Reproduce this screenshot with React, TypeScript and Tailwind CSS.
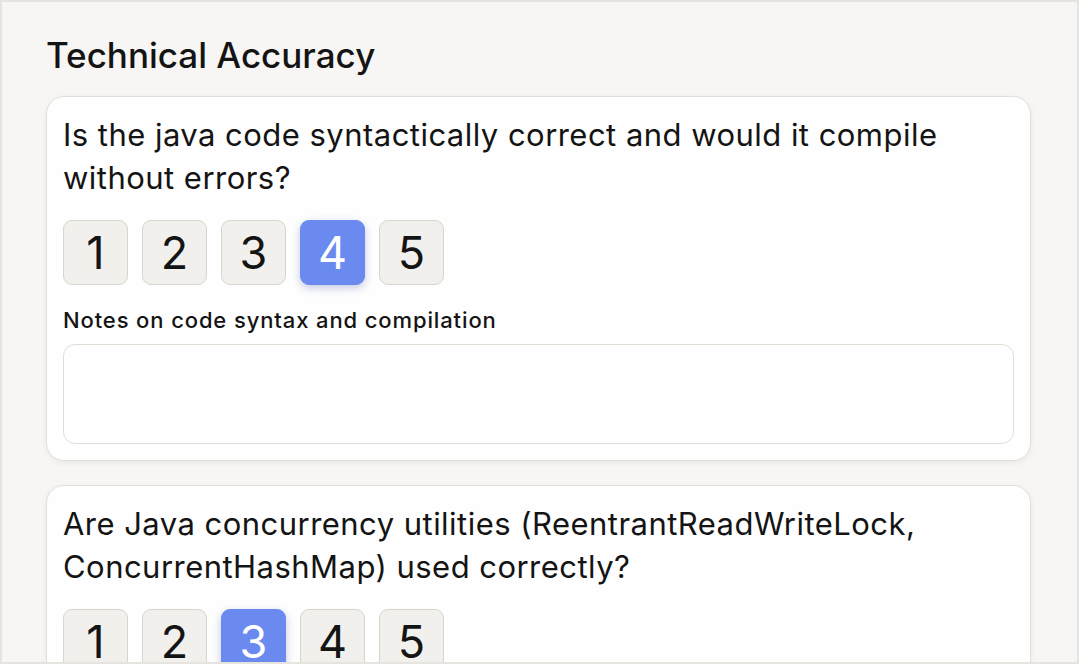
import { useState } from "react";

type Question = {
  id: string;
  text: string;
  selected: number;
  notesLabel?: string;
};

const questions: Question[] = [
  {
    id: "syntax",
    text: "Is the java code syntactically correct and would it compile without errors?",
    selected: 4,
    notesLabel: "Notes on code syntax and compilation",
  },
  {
    id: "concurrency",
    text: "Are Java concurrency utilities (ReentrantReadWriteLock, ConcurrentHashMap) used correctly?",
    selected: 3,
    notesLabel: "Notes on concurrency usage",
  },
];

const RatingButtons = ({ value, onChange }: { value: number; onChange: (v: number) => void }) => (
  <div className="flex gap-[14px]">
    {[1, 2, 3, 4, 5].map((n) => (
      <button
        key={n}
        onClick={() => onChange(n)}
        className={
          n === value
            ? "flex h-[65px] w-[65px] items-center justify-center rounded-[9px] border border-[#6b8af0] bg-[#6b8af0] text-[45px] leading-none text-white shadow-[0_3px_8px_rgba(60,80,160,0.3)]"
            : "flex h-[65px] w-[65px] items-center justify-center rounded-[9px] border border-[#d8d5cc] bg-[#f1f0ec] text-[45px] leading-none text-[#141414]"
        }
      >
        {n}
      </button>
    ))}
  </div>
);

const QuestionCard = ({ q }: { q: Question }) => {
  const [value, setValue] = useState(q.selected);
  return (
    <div className="rounded-[18px] border border-[#e2dfd8] bg-[#fefefe] px-4 pb-4 pt-4 shadow-[0_2px_6px_rgba(0,0,0,0.06)]">
      <p className="text-[31px] leading-[43px] tracking-[0.015em] text-[#141414]">{q.text}</p>
      <div className="mt-[21px]">
        <RatingButtons value={value} onChange={setValue} />
      </div>
      {q.notesLabel && (
        <>
          <label className="mt-[21px] block text-[22px] font-medium leading-[28px] tracking-[0.04em] text-[#141414]">
            {q.notesLabel}
          </label>
          <textarea className="mt-[10px] block h-[100px] w-full resize-none rounded-[12px] border border-[#e0ddd5] bg-[#fefefe] outline-none" />
        </>
      )}
    </div>
  );
};

export default function App() {
  return (
    <div className="h-[664px] w-[1079px] overflow-hidden border-2 border-[#e6e4df] bg-[#f7f6f4] font-['Inter',sans-serif]">
      <div className="w-[1029px] pl-[44px] pt-[32px]">
        <h1 className="text-[35px] font-medium leading-[42px] tracking-[0em] text-[#141414]">
          Technical Accuracy
        </h1>
        <div className="mt-[20px] flex flex-col gap-[24px]">
          {questions.map((q) => (
            <QuestionCard key={q.id} q={q} />
          ))}
        </div>
      </div>
    </div>
  );
}
